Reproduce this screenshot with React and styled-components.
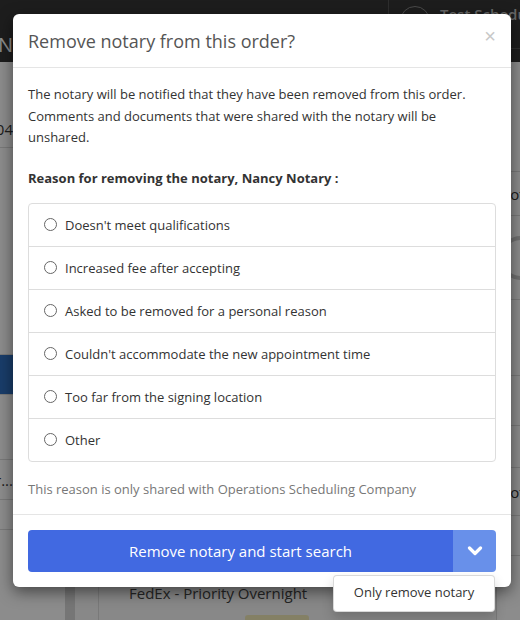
import React from "react"
import styled, { createGlobalStyle } from "styled-components"

const GlobalStyle = createGlobalStyle`
  html, body {
    margin: 0;
    padding: 0;
    height: 100%;
    overflow: hidden;
    font-family: "Open Sans", "Liberation Sans", sans-serif;
  }
  * { box-sizing: border-box; }
`

const Page = styled.div`
  height: 620px;
  display: flex;
  flex-direction: column;
  background: #f7f7f7;
  position: relative;
  overflow: hidden;
`

const Nav = styled.div`
  height: 62px;
  background: #363636;
  display: flex;
  align-items: stretch;
  color: #fff;
`

const Brand = styled.div`
  width: 40px;
  display: flex;
  justify-content: flex-end;
  align-items: center;
  overflow: hidden;
  font-size: 20px;
  padding-top: 26px;
  white-space: nowrap;
  margin-left: -27px;
`

const NavSpacer = styled.div`
  flex: 1;
`

const UserArea = styled.div`
  width: 132px;
  border-left: 1px solid #555;
  display: flex;
  align-items: flex-start;
  gap: 10px;
  padding: 6px 0 0 11px;
  white-space: nowrap;
  overflow: hidden;
  border-bottom: 1px solid #555;
  height: 49px;
`

const Avatar = styled.div`
  width: 30px;
  height: 30px;
  border-radius: 50%;
  border: 1px solid #888;
  flex-shrink: 0;
`

const UserName = styled.div`
  font-size: 15px;
  font-weight: 600;
  color: #bbb;
  margin-top: -2px;
`

const Main = styled.div`
  flex: 1;
  display: flex;
`

const Sidebar = styled.div`
  width: 65px;
  display: flex;
  flex-direction: column;
  background: #fff;
`

const SideRow = styled.div`
  height: ${p => p.h}px;
  border-bottom: 1px solid #ddd;
  background: ${p => (p.active ? "#2f6fc2" : "transparent")};
  font-size: 15px;
  color: #333;
  display: flex;
  align-items: ${p => p.align || "center"};
  padding-bottom: ${p => (p.align === "flex-end" ? "8px" : "0")};
  justify-content: flex-end;
  padding-right: 52px;
  white-space: nowrap;
  overflow: hidden;
`

const Strip = styled.div`
  width: 10px;
  background: #d8d8d8;
`

const ContentCol = styled.div`
  flex: 1;
  display: flex;
  flex-direction: column;
  padding-left: 23px;
`

const ContentPanel = styled.div`
  flex: 1;
  border-left: 1px solid #ddd;
  display: flex;
  flex-direction: column;
  justify-content: flex-end;
  padding: 0 0 0 30px;
`

const ShipText = styled.div`
  font-size: 15px;
  color: #444;
  line-height: 20px;
  margin-bottom: 12px;
`

const Tag = styled.div`
  width: 64px;
  height: 5px;
  margin-left: 116px;
  background: #f1eab8;
  border-radius: 3px 3px 0 0;
`

const RightCol = styled.div`
  width: 24px;
  display: flex;
  flex-direction: column;
  background: #fff;
  border-left: 1px solid #ddd;
`

const RightRow = styled.div`
  height: ${p => p.h}px;
  border-bottom: 1px solid #ddd;
  font-size: 15px;
  color: ${p => p.color || "#333"};
  display: flex;
  align-items: center;
  padding-left: 2px;
  white-space: nowrap;
  overflow: hidden;
`

const Ring = styled.div`
  width: 44px;
  height: 44px;
  border-radius: 50%;
  border: 4px solid #ccc;
  flex-shrink: 0;
`

const Overlay = styled.div`
  position: absolute;
  inset: 0;
  background: rgba(0, 0, 0, 0.45);
`

const Dialog = styled.div`
  position: absolute;
  left: 13px;
  top: 14px;
  width: 498px;
  background: #fff;
  border-radius: 6px;
  box-shadow: 0 5px 15px rgba(0, 0, 0, 0.5);
`

const Header = styled.div`
  height: 54px;
  padding: 0 15px;
  display: flex;
  align-items: center;
  justify-content: space-between;
  border-bottom: 1px solid #e5e5e5;
`

const Title = styled.h4`
  margin: 0;
  font-size: 18px;
  font-weight: 400;
  color: #555;
`

const Close = styled.span`
  font-size: 20px;
  color: #c8c8c8;
  margin-top: -8px;
  margin-right: 0;
  font-family: "Liberation Sans", sans-serif;
`

const Body = styled.div`
  padding: 16px 15px 15px;
`

const Text = styled.p`
  margin: 0;
  font-size: 13px;
  line-height: 21.5px;
  color: #333;
`

const Label = styled.div`
  margin-top: 19px;
  font-size: 13px;
  line-height: 20px;
  font-weight: 700;
  color: #333;
`

const Options = styled.div`
  margin-top: 15px;
  border: 1px solid #ddd;
  border-radius: 4px;
`

const Option = styled.label`
  height: 43px;
  display: flex;
  align-items: center;
  gap: 8px;
  padding-left: 15px;
  font-size: 13px;
  color: #333;
  border-top: 1px solid #ddd;

  &:first-child {
    border-top: none;
    height: 42px;
  }
`

const Radio = styled.span`
  width: 13px;
  height: 13px;
  border-radius: 50%;
  border: 1px solid #666;
  background: #fff;
  flex-shrink: 0;
`

const Note = styled.div`
  margin-top: 17px;
  font-size: 13px;
  line-height: 20px;
  color: #777;
`

const Footer = styled.div`
  border-top: 1px solid #e5e5e5;
  padding: 15px;
  position: relative;
`

const SplitButton = styled.div`
  display: flex;
  height: 42px;
  border-radius: 4px;
  overflow: hidden;
`

const MainButton = styled.button`
  flex: 1;
  border: none;
  background: #4169e1;
  color: #fff;
  font-family: inherit;
  font-size: 15px;
  font-weight: 500;
  padding: 0;
`

const Toggle = styled.button`
  width: 43px;
  border: none;
  background: #6890ea;
  display: flex;
  align-items: center;
  justify-content: center;
  padding: 0;
`

const Menu = styled.div`
  position: absolute;
  right: 16px;
  top: 60px;
  width: 162px;
  height: 37px;
  background: #fff;
  border: 1px solid rgba(0, 0, 0, 0.15);
  border-radius: 4px;
  box-shadow: 0 6px 12px rgba(0, 0, 0, 0.175);
  display: flex;
  align-items: center;
  justify-content: center;
  padding-bottom: 2px;
  font-size: 13px;
  color: #333;
`

const reasons = [
  "Doesn't meet qualifications",
  "Increased fee after accepting",
  "Asked to be removed for a personal reason",
  "Couldn't accommodate the new appointment time",
  "Too far from the signing location",
  "Other",
]

const Chevron = () => (
  <svg width="16" height="10" viewBox="0 0 16 10">
    <path d="M2.5 2 L8 7.5 L13.5 2" fill="none" stroke="#fff" strokeWidth="3.2" strokeLinecap="round" strokeLinejoin="round" />
  </svg>
)

const Background = () => (
  <>
    <Nav>
      <Brand>ADMIN</Brand>
      <NavSpacer />
      <UserArea>
        <Avatar />
        <UserName>Test Scheduling</UserName>
      </UserArea>
    </Nav>
    <Main>
      <Sidebar>
        <SideRow h={86} align="flex-end">1004</SideRow>
        <SideRow h={207} />
        <SideRow h={40} active />
        <SideRow h={65} />
        <SideRow h={40}>Partner...</SideRow>
        <SideRow h={30} />
      </Sidebar>
      <Strip />
      <ContentCol>
        <ContentPanel>
          <ShipText>FedEx - Priority Overnight</ShipText>
          <Tag />
        </ContentPanel>
      </ContentCol>
      <RightCol>
        <RightRow h={110} />
        <RightRow h={44}>Not</RightRow>
        <RightRow h={84}><Ring /></RightRow>
        <RightRow h={76} color="#3a9a3a">▲</RightRow>
        <RightRow h={50}>ie</RightRow>
        <RightRow h={42}>fi</RightRow>
        <RightRow h={48}>Not</RightRow>
        <RightRow h={40}>fi</RightRow>
      </RightCol>
    </Main>
  </>
)

const App = () => (
  <Page>
    <GlobalStyle />
    <Background />
    <Overlay />
    <Dialog>
      <Header>
        <Title>Remove notary from this order?</Title>
        <Close>×</Close>
      </Header>
      <Body>
        <Text>
          The notary will be notified that they have been removed from this order.
          Comments and documents that were shared with the notary will be unshared.
        </Text>
        <Label>Reason for removing the notary, Nancy Notary :</Label>
        <Options>
          {reasons.map(r => (
            <Option key={r}>
              <Radio />
              {r}
            </Option>
          ))}
        </Options>
        <Note>This reason is only shared with Operations Scheduling Company</Note>
      </Body>
      <Footer>
        <SplitButton>
          <MainButton>Remove notary and start search</MainButton>
          <Toggle><Chevron /></Toggle>
        </SplitButton>
        <Menu>Only remove notary</Menu>
      </Footer>
    </Dialog>
  </Page>
)

export default App
